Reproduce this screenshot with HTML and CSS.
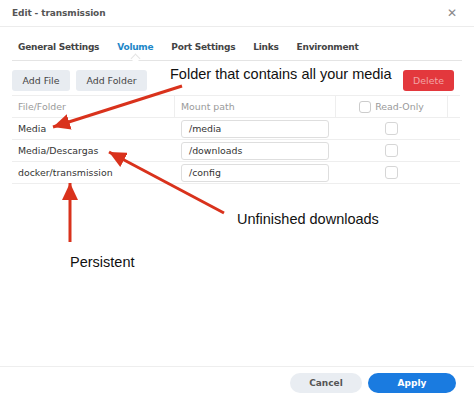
FILE: index.html
```html
<!DOCTYPE html>
<html>
<head>
<meta charset="utf-8">
<link rel="stylesheet" href="styles.css">
</head>
<body>
<div class="dialog">
  <div class="header">
    <span class="title">Edit - transmission</span>
    <span class="close">✕</span>
  </div>
  <div class="tabs">
    <span class="tab">General Settings</span>
    <span class="tab active">Volume</span>
    <span class="tab">Port Settings</span>
    <span class="tab">Links</span>
    <span class="tab">Environment</span>
  </div>
  <div class="toolbar">
    <button class="btn">Add File</button>
    <button class="btn">Add Folder</button>
    <span class="spacer"></span>
    <button class="btn danger">Delete</button>
  </div>
  <div class="table">
    <div class="row head">
      <div class="cell c1">File/Folder</div>
      <div class="cell c2">Mount path</div>
      <div class="cell c3"><span class="cb"></span>Read-Only</div>
      <div class="cell c4"></div>
    </div>
    <div class="row">
      <div class="cell c1">Media</div>
      <div class="cell c2"><div class="input">/media</div></div>
      <div class="cell c3"><span class="cb"></span></div>
      <div class="cell c4"></div>
    </div>
    <div class="row">
      <div class="cell c1">Media/Descargas</div>
      <div class="cell c2"><div class="input">/downloads</div></div>
      <div class="cell c3"><span class="cb"></span></div>
      <div class="cell c4"></div>
    </div>
    <div class="row">
      <div class="cell c1">docker/transmission</div>
      <div class="cell c2"><div class="input">/config</div></div>
      <div class="cell c3"><span class="cb"></span></div>
      <div class="cell c4"></div>
    </div>
  </div>
  <div class="fill"></div>
  <div class="footer">
    <button class="pill cancel">Cancel</button>
    <button class="pill apply">Apply</button>
  </div>

  <svg class="arrows" width="474" height="401" viewBox="0 0 474 401">
    <defs>
      <marker id="ah" markerUnits="userSpaceOnUse" markerWidth="18" markerHeight="16" refX="17" refY="8" orient="auto">
        <path d="M0,0 L17,8 L0,16 Z" fill="#d9321c"/>
      </marker>
    </defs>
    <line x1="182" y1="86" x2="53" y2="127" stroke="#d9321c" stroke-width="3" marker-end="url(#ah)"/>
    <line x1="224" y1="213" x2="109" y2="152" stroke="#d9321c" stroke-width="3" marker-end="url(#ah)"/>
    <line x1="70" y1="242" x2="70" y2="183" stroke="#d9321c" stroke-width="3" marker-end="url(#ah)"/>
  </svg>
  <div class="note n1">Folder that contains all your media</div>
  <div class="note n2">Unfinished downloads</div>
  <div class="note n3">Persistent</div>
</div>
</body>
</html>
```
FILE: styles.css
```css
* { box-sizing: border-box; }
html, body { margin: 0; padding: 0; background: #fff; }
body { font-family: "DejaVu Sans", Verdana, sans-serif; font-size: 9px; color: #333; }
.dialog { position: relative; width: 474px; height: 401px; display: flex; flex-direction: column; overflow: hidden; }
.header { height: 27px; display: flex; align-items: center; justify-content: space-between; padding: 0 17px 0 12px; border-bottom: 1px solid #ececec; }
.title { font-weight: bold; color: #555; font-size: 9px; letter-spacing: -0.1px; }
.close { color: #888; font-size: 12px; }
.tabs { margin: 0 12px; height: 34px; display: flex; align-items: center; gap: 18px; padding-left: 6px; padding-top: 6px; border-bottom: 1px solid #e4e4e4; position: relative; }
.tab { font-weight: bold; color: #444; font-size: 9px; letter-spacing: -0.25px; }
.tab.active { color: #1d87c8; position: relative; }
.tab.active::after { content: ""; position: absolute; left: 50%; bottom: -10px; width: 6px; height: 6px; margin-left: -3px; background: #fff; border-left: 1px solid #e4e4e4; border-top: 1px solid #e4e4e4; transform: rotate(45deg); }
.toolbar { display: flex; align-items: center; gap: 6px; margin: 9px 20px 0 12px; }
.spacer { flex: 1; }
button { font-family: inherit; font-size: 9.4px; border: none; cursor: pointer; }
.btn { height: 21px; padding: 0 10px; width: auto; border-radius: 3px; background: #e8ecf1; color: #444; }
.btn:first-child { width: 58px; padding: 0; }
.btn:nth-child(2) { width: 71px; padding: 0; }
.btn.danger { background: #e3383d; color: #f2a5a6; width: 51px; padding: 0; }
.table { margin: 4px 14px 0 12px; border-top: 1px solid #eee; font-size: 9.4px; }
.row { display: flex; height: 22px; border-bottom: 1px solid #eee; align-items: center; }
.row.head { height: 22px; color: #9a9a9a; }
.cell { height: 100%; display: flex; align-items: center; }
.c1 { width: 162px; padding-left: 6px; }
.c2 { width: 161px; padding-left: 7px; }
.c3 { width: 112px; justify-content: center; }
.c4 { width: 13px; }
.head .c2, .head .c3, .head .c4 { border-left: 1px solid #eee; }
.head .c2 { padding-left: 6px; }
.input { width: 148px; height: 18px; border: 1px solid #dedede; border-radius: 3px; padding-left: 7px; display: flex; align-items: center; color: #333; }
.cb { width: 13px; height: 13px; border: 1px solid #d6d6d6; border-radius: 3px; display: inline-block; }
.head .cb { width: 12px; height: 12px; margin-right: 4px; border-color: #ccc; }
.fill { flex: 1; }
.footer { height: 35px; border-top: 1px solid #eee; display: flex; justify-content: flex-end; align-items: flex-start; padding: 6px 18px 0 0; gap: 6px; }
.pill { height: 20px; border-radius: 10px; font-weight: bold; font-size: 9px; }
.cancel { width: 72px; background: #e9edf2; color: #555; }
.apply { width: 88px; background: #1a7be0; color: #fff; }
.arrows { position: absolute; left: 0; top: 0; pointer-events: none; }
.note { position: absolute; font-family: "Liberation Sans", Arial, sans-serif; font-size: 14.5px; color: #111; white-space: nowrap; line-height: 16px; }
.n1 { left: 170px; top: 66px; }
.n2 { left: 237px; top: 211px; }
.n3 { left: 70px; top: 254px; }
```
